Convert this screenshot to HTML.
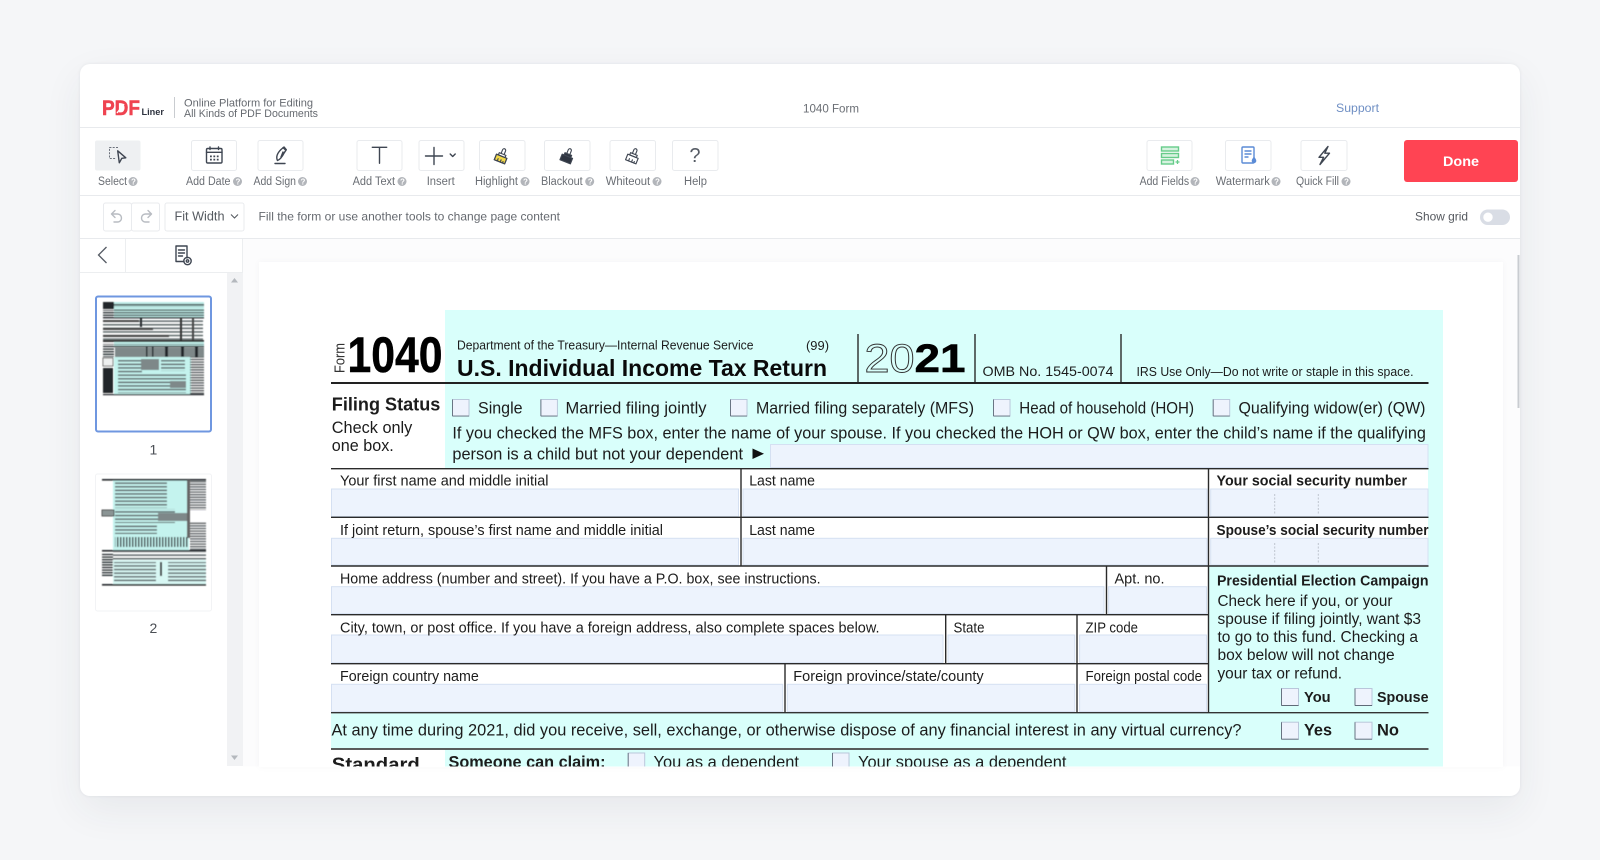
<!DOCTYPE html>
<html lang="en"><head><meta charset="utf-8"><title>1040 Form - PDF Liner</title>
<style>
html,body{margin:0;padding:0;width:1600px;height:860px;overflow:hidden;background:#f5f6f8;font-family:"Liberation Sans",sans-serif}
.card{position:absolute;left:80px;top:64px;width:1440px;height:732px;background:#fff;border-radius:10px;box-shadow:0 14px 40px rgba(40,50,70,.07),0 0 3px rgba(40,50,70,.08)}
svg.main{position:absolute;left:0;top:0;filter:blur(.3px)}
text{font-family:"Liberation Sans",sans-serif;fill:#1c1c1c}
.l{font-size:11.5px;fill:#6a6e74}
.f{font-size:14.5px}
.m{font-size:16.5px}
.b{font-weight:bold}
.bt{fill:#fff;stroke:#e9ebee;stroke-width:1}
.i{fill:none;stroke:#3f4652;stroke-width:1.4;stroke-linecap:round;stroke-linejoin:round}
.r{stroke:#2a2a2a;stroke-width:1.4;fill:none}
.fd{fill:#edf3fd;stroke:#d5e0f2;stroke-width:1}
.h{font-size:8px;fill:#fff;font-weight:bold}
</style></head>
<body>
<div class="card"></div>
<svg class="main" width="1600" height="860" viewBox="0 0 1600 860" xmlns="http://www.w3.org/2000/svg">
<defs>
<clipPath id="cl"><rect x="243" y="239" width="1277" height="527.5"/></clipPath>
<pattern id="st" width="3" height="2.6" patternUnits="userSpaceOnUse"><rect width="3" height="1.4" fill="#2f3638"/></pattern>
<pattern id="st2" width="3" height="3.6" patternUnits="userSpaceOnUse"><rect width="3" height="1.5" fill="#5b6668"/></pattern>
<pattern id="st3" width="3" height="3" patternUnits="userSpaceOnUse"><rect width="1.5" height="3" fill="#3a4244"/></pattern>
<filter id="bl" x="-5%" y="-5%" width="110%" height="110%"><feGaussianBlur stdDeviation=".65"/></filter>
<symbol id="cb" viewBox="0 0 18 18" overflow="visible"><rect x=".5" y=".5" width="17" height="17" fill="#eef3fd" stroke="#b9c6da"/><path d="M.5 17.5h17M.5.5v17" stroke="#5f6a78" stroke-width=".9" fill="none"/></symbol>
<g id="brush"><path d="M-2-2v-5a2 2 0 0 1 4 0v5"/><path d="M-4.5-2h9v3h-9z"/><path d="M-7 1h14v7.5h-14z"/><path d="M-3 8.5v-3M1 8.5v-3M4 8.5v-2"/></g>
</defs>

<!-- header -->
<rect x="80" y="127" width="1440" height="1" fill="#e8eaed"/>
<text x="102" y="115" font-size="21.500" font-weight="bold" style="fill:#ef4350;stroke:#ef4350;stroke-width:.5" textLength="38" lengthAdjust="spacingAndGlyphs">PDF</text>
<path d="M117 113l7-9" stroke="#fff" stroke-width="1.400"/>
<text x="141.500" y="115" font-size="9.500" font-weight="bold" style="fill:#2f3440" textLength="22.500" lengthAdjust="spacingAndGlyphs">Liner</text>
<rect x="174" y="97" width="1" height="21" fill="#c9ccd0"/>
<text x="184" y="106.500" font-size="11" style="fill:#666a70" textLength="129" lengthAdjust="spacingAndGlyphs">Online Platform for Editing</text>
<text x="184" y="117" font-size="11" style="fill:#666a70" textLength="134" lengthAdjust="spacingAndGlyphs">All Kinds of PDF Documents</text>
<text x="803" y="112.500" font-size="12" style="fill:#6a6e74" textLength="56" lengthAdjust="spacingAndGlyphs">1040 Form</text>
<text x="1336" y="112" font-size="12" style="fill:#6f8fc4" textLength="43" lengthAdjust="spacingAndGlyphs">Support</text>

<!-- toolbar -->
<rect x="80" y="195" width="1440" height="1" fill="#e8eaed"/>
<rect x="95" y="140.500" width="45.500" height="30" rx="2" fill="#eef0f2"/>
<g class="bt"><rect x="191.500" y="140.500" width="45" height="30" rx="2"/><rect x="258" y="140.500" width="45" height="30" rx="2"/><rect x="357" y="140.500" width="45" height="30" rx="2"/><rect x="419" y="140.500" width="45" height="30" rx="2"/><rect x="479.500" y="140.500" width="45.500" height="30" rx="2"/><rect x="544.500" y="140.500" width="45.500" height="30" rx="2"/><rect x="610" y="140.500" width="45.500" height="30" rx="2"/><rect x="672.500" y="140.500" width="45.500" height="30" rx="2"/><rect x="1147" y="140.500" width="45" height="30" rx="2"/><rect x="1225.500" y="140.500" width="45.500" height="30" rx="2"/><rect x="1301" y="140.500" width="46" height="30" rx="2"/></g>
<!-- select icon -->
<path d="M118 147.500h-8.500v11h6" fill="none" stroke="#6b717b" stroke-width="1" stroke-dasharray="2 1.300"/>
<path class="i" d="M117.700 150.800L125.800 157.800L121.800 158.300L119.300 162.800Z"/>
<!-- calendar -->
<g class="i"><rect x="206.500" y="148.500" width="15.500" height="14.500" rx="1.300"/><path d="M206.500 152.300h15.500M210 147v2.500M218.500 147v2.500"/></g>
<path d="M210 155.500h1.800v1.700H210zM213.400 155.500h1.800v1.700h-1.800zM216.800 155.500h1.800v1.700h-1.800zM210 158.800h1.800v1.700H210zM213.400 158.800h1.800v1.700h-1.800zM216.800 158.800h1.800v1.700h-1.800z" fill="#3f4652"/>
<!-- sign -->
<g class="i"><path d="M277.500 160.500c-2-4 .5-8 3.500-11l3-2.500 2.300 2.700-2 3c-1.800 3.500-3.800 6.800-6.800 7.800zM281 157l2-5M283 147.600l2.800 2.600M275 163.500h10"/></g>
<!-- T -->
<path class="i" d="M372.300 147.300h14.400M379.500 147.300v16"/>
<!-- plus -->
<path class="i" d="M434 147.500v17M425.500 156h17"/><path class="i" d="M450.200 154l2.500 2.500 2.500-2.500" stroke-width="1.100"/>
<!-- brushes -->
<g transform="translate(502 155.500) rotate(22) scale(.8)" class="i"><path d="M-7 1h14v7.500h-14z" fill="#f3d948" stroke="#3f4652"/><use href="#brush"/></g>
<g transform="translate(567.700 155.500) rotate(22) scale(.8)" class="i"><path d="M-7 1h14v7.500h-14z" fill="#2e3440"/><path d="M-4.500-2h9v3h-9z" fill="#2e3440"/><path d="M-2-2v-5a2 2 0 0 1 4 0v5"/></g>
<g transform="translate(633.300 155.500) rotate(22) scale(.8)" class="i"><use href="#brush"/></g>
<text x="689.500" y="162" font-size="20" style="fill:#555b64" textLength="11" lengthAdjust="spacingAndGlyphs">?</text>
<!-- add fields -->
<g fill="#d6f2e0" stroke="#66cc8a" stroke-width="1.400"><rect x="1161.500" y="147" width="17" height="4"/><rect x="1161.500" y="153.500" width="17" height="4"/><rect x="1161.500" y="160" width="12" height="4"/></g>
<path d="M1177.500 160v4M1175.500 162h4" stroke="#66cc8a" stroke-width="1.300"/>
<!-- watermark -->
<g fill="none" stroke="#5b8bd6" stroke-width="1.400"><rect x="1242" y="147" width="12" height="16" rx="1"/><path d="M1244.500 151h7M1244.500 154h7M1244.500 157h4"/></g>
<path d="M1254 156.500c-1.500 2-2.300 3.200-2.300 4.400a2.300 2.300 0 0 0 4.600 0c0-1.200-.8-2.400-2.300-4.400z" fill="#5b8bd6"/>
<!-- bolt -->
<path class="i" d="M1328 146.500L1319 157.300h4.600L1320 164.500l9.500-11.300h-4.700z" stroke-width="1.200"/>
<!-- labels -->
<text class="l" x="98" y="185" textLength="29" lengthAdjust="spacingAndGlyphs">Select</text>
<text class="l" x="186" y="185" textLength="44.500" lengthAdjust="spacingAndGlyphs">Add Date</text>
<text class="l" x="253.500" y="185" textLength="42.500" lengthAdjust="spacingAndGlyphs">Add Sign</text>
<text class="l" x="352.600" y="185" textLength="42.500" lengthAdjust="spacingAndGlyphs">Add Text</text>
<text class="l" x="426.700" y="185" textLength="28" lengthAdjust="spacingAndGlyphs">Insert</text>
<text class="l" x="475" y="185" textLength="43" lengthAdjust="spacingAndGlyphs">Highlight</text>
<text class="l" x="541" y="185" textLength="41.700" lengthAdjust="spacingAndGlyphs">Blackout</text>
<text class="l" x="605.700" y="185" textLength="44.500" lengthAdjust="spacingAndGlyphs">Whiteout</text>
<text class="l" x="684" y="185" textLength="23" lengthAdjust="spacingAndGlyphs">Help</text>
<text class="l" x="1139.600" y="185" textLength="49.500" lengthAdjust="spacingAndGlyphs">Add Fields</text>
<text class="l" x="1215.800" y="185" textLength="54" lengthAdjust="spacingAndGlyphs">Watermark</text>
<text class="l" x="1296" y="185" textLength="43" lengthAdjust="spacingAndGlyphs">Quick Fill</text>
<g fill="#b2b5ba"><circle cx="133" cy="181.500" r="4.500"/><circle cx="237.500" cy="181.500" r="4.500"/><circle cx="302.500" cy="181.500" r="4.500"/><circle cx="402" cy="181.500" r="4.500"/><circle cx="525" cy="181.500" r="4.500"/><circle cx="589.700" cy="181.500" r="4.500"/><circle cx="657" cy="181.500" r="4.500"/><circle cx="1195" cy="181.500" r="4.500"/><circle cx="1276" cy="181.500" r="4.500"/><circle cx="1346" cy="181.500" r="4.500"/></g>
<g class="h"><text class="h" x="131" y="184.300">?</text><text class="h" x="235.500" y="184.300">?</text><text class="h" x="300.500" y="184.300">?</text><text class="h" x="400" y="184.300">?</text><text class="h" x="523" y="184.300">?</text><text class="h" x="587.700" y="184.300">?</text><text class="h" x="655" y="184.300">?</text><text class="h" x="1193" y="184.300">?</text><text class="h" x="1274" y="184.300">?</text><text class="h" x="1344" y="184.300">?</text></g>
<rect x="1404" y="140" width="114" height="42" rx="3" fill="#ff4453"/>
<text x="1443" y="166" font-size="14" font-weight="bold" style="fill:#fff" textLength="36" lengthAdjust="spacingAndGlyphs">Done</text>

<!-- sub bar -->
<rect x="80" y="238" width="1440" height="1" fill="#e8eaed"/>
<g class="bt"><rect x="103.500" y="203" width="28" height="28" rx="2"/><rect x="131.500" y="203" width="28" height="28" rx="2"/><rect x="165" y="203" width="79" height="28" rx="2"/></g>
<g fill="none" stroke="#b8bcc2" stroke-width="1.400" stroke-linecap="round" stroke-linejoin="round"><path d="M115 210.500l-3.500 3.500 3.500 3.500M111.500 214h6a4 4 0 0 1 0 8H114"/><path d="M148 210.500l3.500 3.500-3.500 3.500M151.500 214h-6a4 4 0 0 0 0 8H149"/></g>
<text x="174.500" y="220.500" font-size="13" style="fill:#555a60" textLength="50" lengthAdjust="spacingAndGlyphs">Fit Width</text>
<path d="M231 214.500l3.500 3.500 3.500-3.500" fill="none" stroke="#555a60" stroke-width="1.100"/>
<text x="258.500" y="220.500" font-size="12" style="fill:#666a70" textLength="301.500" lengthAdjust="spacingAndGlyphs">Fill the form or use another tools to change page content</text>
<text x="1415" y="220.500" font-size="12" style="fill:#54585e" textLength="53" lengthAdjust="spacingAndGlyphs">Show grid</text>
<rect x="1480" y="209.500" width="30" height="15.500" rx="7.750" fill="#d9dde5"/><circle cx="1488" cy="217.200" r="4.700" fill="#fff"/>

<!-- sidebar -->
<rect x="242" y="239" width="1" height="527" fill="#eceef0"/>
<rect x="125" y="239" width="1" height="33" fill="#eceef0"/>
<rect x="80" y="272" width="162" height="1" fill="#eceef0"/>
<path d="M106.500 247L98.500 255l8 8" fill="none" stroke="#555b64" stroke-width="1.300"/>
<g class="i" stroke-width="1.200" fill="none"><path d="M187 258v-12h-11v15.500h8"/><path d="M178.500 250h6M178.500 253h6M178.500 256h4"/><circle cx="187.500" cy="261" r="3.700"/><circle cx="187.500" cy="261" r="1.200"/></g>
<rect x="227" y="273" width="16" height="493" fill="#f1f2f4"/>
<path d="M234.500 278l3.500 4.500h-7z" fill="#b4b8bd"/><path d="M234.500 760l3.500-4.500h-7z" fill="#b4b8bd"/>
<!-- thumb 1 -->
<rect x="96" y="296.500" width="115" height="135" rx="2" fill="#fff" stroke="#6f97e0" stroke-width="2"/>
<g filter="url(#bl)">
<rect x="114" y="302" width="90" height="15" fill="#c4f3ee"/>
<rect x="103" y="302" width="11" height="7" fill="#23282a"/>
<rect x="114" y="303" width="90" height="4" fill="url(#st)"/>
<rect x="114" y="309" width="90" height="7" fill="url(#st)" opacity=".8"/>
<rect x="103" y="310" width="11" height="6" fill="url(#st)"/>
<rect x="103" y="317" width="101" height="1.400" fill="#23282a"/>
<rect x="103" y="320" width="100" height="20" fill="url(#st2)"/>
<rect x="103" y="320" width="36" height="2" fill="#444"/><rect x="103" y="328" width="50" height="2" fill="#444"/><rect x="103" y="335" width="66" height="2" fill="#444"/>
<rect x="140" y="317" width="2" height="10" fill="#23282a"/>
<rect x="180" y="317" width="2" height="24" fill="#333"/><rect x="192" y="317" width="2" height="24" fill="#444"/>
<rect x="114" y="340" width="90" height="7" fill="#c4f3ee"/>
<rect x="103" y="340" width="101" height="2" fill="#333"/>
<rect x="103" y="344" width="101" height="3.500" fill="url(#st)"/>
<rect x="115" y="347.500" width="89" height="10" fill="#7e8889"/>
<rect x="103" y="348" width="11" height="9" fill="url(#st)"/>
<rect x="146" y="347" width="1.500" height="10" fill="#23282a"/><rect x="152" y="347" width="1.500" height="10" fill="#23282a"/><rect x="165" y="347" width="3" height="10" fill="#23282a"/><rect x="181" y="347" width="3" height="10" fill="#23282a"/><rect x="195" y="347" width="3" height="10" fill="#23282a"/>
<rect x="114" y="357" width="77" height="38" fill="#c4f3ee"/>
<rect x="118" y="359" width="24" height="14" fill="url(#st2)"/>
<rect x="141" y="359" width="18" height="11" fill="#7e8889"/>
<rect x="161" y="359" width="24" height="12" fill="url(#st2)"/>
<rect x="118" y="374" width="68" height="19" fill="url(#st2)"/>
<rect x="170" y="381" width="16" height="7" fill="#7e8889"/>
<rect x="190" y="357" width="14" height="38" fill="url(#st)" opacity=".8"/>
<rect x="103" y="358" width="10" height="8" fill="#eef0f0" stroke="#444" stroke-width=".8"/>
<rect x="103" y="368" width="10" height="25" fill="#23282a"/>
<rect x="103" y="394" width="101" height="1.200" fill="#23282a"/>
</g>
<text x="149.500" y="454.500" font-size="14" style="fill:#4a4e54">1</text>
<!-- thumb 2 -->
<rect x="95.500" y="474" width="116" height="137" rx="2" fill="#fff" stroke="#f2f3f5"/>
<g filter="url(#bl)">
<rect x="113" y="480" width="76" height="70" fill="#c4f3ee"/>
<rect x="102" y="479" width="104" height="1.600" fill="#23282a"/>
<rect x="115" y="482" width="52" height="26" fill="url(#st2)"/>
<rect x="115" y="509" width="60" height="14" fill="url(#st2)"/>
<rect x="158" y="513" width="30" height="8" fill="#7e8889"/>
<rect x="115" y="524" width="42" height="10" fill="url(#st2)"/>
<rect x="187" y="480" width="3" height="58" fill="#666"/>
<rect x="190" y="480" width="16" height="30" fill="url(#st)" opacity=".75"/>
<rect x="190" y="522" width="16" height="28" fill="url(#st)" opacity=".75"/>
<rect x="102" y="510" width="12" height="6" fill="#8a9494" stroke="#333" stroke-width=".8"/>
<rect x="115" y="537" width="74" height="10" fill="url(#st3)"/>
<rect x="102" y="550" width="104" height="1.600" fill="#23282a"/>
<rect x="102" y="553" width="11" height="24" fill="url(#st)"/>
<rect x="113" y="552" width="93" height="8" fill="url(#st2)"/>
<rect x="113" y="560" width="93" height="24" fill="#d8f8f4"/>
<rect x="114" y="562" width="42" height="20" fill="url(#st2)"/>
<rect x="160" y="562" width="2" height="14" fill="#333"/><rect x="168" y="562" width="38" height="20" fill="url(#st2)"/>
<rect x="102" y="584" width="104" height="1.600" fill="#23282a"/>
</g>
<text x="149.500" y="633" font-size="14" style="fill:#4a4e54">2</text>

<!-- main area -->
<rect x="243" y="239" width="1277" height="527.500" fill="#fcfcfd"/>
<rect x="259" y="262" width="1244" height="505" fill="#fff" style="filter:drop-shadow(0 0 3px rgba(0,0,0,.03))"/>
<rect x="1517.500" y="255" width="2" height="153" fill="#c9ccd1"/>

<g clip-path="url(#cl)">
<!-- teal zones -->
<path d="M445 310H1443V767H331V713H1208V566H1428V469H445Z" fill="#d9fffb"/>
<rect x="331" y="749" width="114" height="20" fill="#fff"/>
<!-- header of form -->
<text transform="translate(344.500 373) rotate(-90)" font-size="15" style="fill:#333" textLength="30" lengthAdjust="spacingAndGlyphs">Form</text>
<text x="347.500" y="372" font-size="50" font-weight="bold" style="fill:#000;stroke:#000;stroke-width:.5" textLength="95" lengthAdjust="spacingAndGlyphs">1040</text>
<text x="457" y="349.500" font-size="12.500" textLength="296.500" lengthAdjust="spacingAndGlyphs">Department of the Treasury—Internal Revenue Service</text>
<text x="806" y="350" font-size="13" textLength="23" lengthAdjust="spacingAndGlyphs">(99)</text>
<text x="457" y="376" font-size="23" font-weight="bold" style="fill:#0a0a0a" textLength="370" lengthAdjust="spacingAndGlyphs">U.S. Individual Income Tax Return</text>
<text x="864.500" y="372" font-size="40" style="fill:none;stroke:#333;stroke-width:.9" textLength="50" lengthAdjust="spacingAndGlyphs">20</text>
<text x="914.500" y="372" font-size="40" font-weight="bold" style="fill:#000;stroke:#000;stroke-width:.6" textLength="51" lengthAdjust="spacingAndGlyphs">21</text>
<text x="982.500" y="376" font-size="14" textLength="131" lengthAdjust="spacingAndGlyphs">OMB No. 1545-0074</text>
<text x="1136.500" y="376" font-size="12.500" textLength="277" lengthAdjust="spacingAndGlyphs">IRS Use Only—Do not write or staple in this space.</text>
<path class="r" d="M858 334V383M975 334V383M1121 334V383"/>
<path d="M331 383H1428.500" stroke="#222" stroke-width="2"/>
<!-- filing status -->
<text x="331.800" y="410.700" font-size="18.500" font-weight="bold" textLength="108.500" lengthAdjust="spacingAndGlyphs">Filing Status</text>
<text x="331.800" y="433" class="m" textLength="80.500" lengthAdjust="spacingAndGlyphs">Check only</text>
<text x="331.800" y="451" class="m" textLength="62" lengthAdjust="spacingAndGlyphs">one box.</text>
<use href="#cb" x="452" y="399" width="17.500" height="17.500"/><use href="#cb" x="540.400" y="399" width="17.500" height="17.500"/><use href="#cb" x="730" y="399" width="17.500" height="17.500"/><use href="#cb" x="993" y="399" width="17.500" height="17.500"/><use href="#cb" x="1212.700" y="399" width="17.500" height="17.500"/>
<text x="478" y="413.500" class="m" textLength="44.600" lengthAdjust="spacingAndGlyphs">Single</text>
<text x="565.500" y="413.500" class="m" textLength="141" lengthAdjust="spacingAndGlyphs">Married filing jointly</text>
<text x="756" y="413.500" class="m" textLength="218" lengthAdjust="spacingAndGlyphs">Married filing separately (MFS)</text>
<text x="1019.300" y="413.500" class="m" textLength="174.700" lengthAdjust="spacingAndGlyphs">Head of household (HOH)</text>
<text x="1238.500" y="413.500" class="m" textLength="187" lengthAdjust="spacingAndGlyphs">Qualifying widow(er) (QW)</text>
<text x="452.400" y="438.500" class="m" textLength="973.500" lengthAdjust="spacingAndGlyphs">If you checked the MFS box, enter the name of your spouse. If you checked the HOH or QW box, enter the child’s name if the qualifying</text>
<text x="452.400" y="459.500" class="m" textLength="290.600" lengthAdjust="spacingAndGlyphs">person is a child but not your dependent</text>
<path d="M752.500 448.500L764 453.800 752.500 459Z" fill="#111"/>
<rect class="fd" x="770.500" y="444.500" width="657.500" height="23"/>
<!-- name rows -->
<rect class="fd" x="331.500" y="489" width="407" height="27.500"/><rect class="fd" x="743" y="489" width="464" height="27.500"/><rect class="fd" x="1210.700" y="489" width="217.300" height="27.500"/>
<rect class="fd" x="331.500" y="538.300" width="407" height="26.700"/><rect class="fd" x="743" y="538.300" width="464" height="26.700"/><rect class="fd" x="1210.700" y="538.300" width="217.300" height="26.700"/>
<path d="M1274.700 494V514M1318.300 494V514M1274.700 543V563M1318.300 543V563" stroke="#bfc5cf" stroke-width="1" stroke-dasharray="2 1.500"/>
<text x="340" y="485.500" class="f" textLength="208.500" lengthAdjust="spacingAndGlyphs">Your first name and middle initial</text>
<text x="749.200" y="485.500" class="f" textLength="65.800" lengthAdjust="spacingAndGlyphs">Last name</text>
<text x="1216.500" y="485.500" class="f b" textLength="190.500" lengthAdjust="spacingAndGlyphs">Your social security number</text>
<text x="340" y="534.800" class="f" textLength="323" lengthAdjust="spacingAndGlyphs">If joint return, spouse’s first name and middle initial</text>
<text x="749.200" y="534.800" class="f" textLength="65.800" lengthAdjust="spacingAndGlyphs">Last name</text>
<text x="1216.500" y="534.800" class="f b" textLength="212" lengthAdjust="spacingAndGlyphs">Spouse’s social security number</text>
<!-- address rows -->
<rect class="fd" x="331.500" y="586.700" width="772.500" height="27"/><rect class="fd" x="1108.600" y="586.700" width="97.900" height="27"/>
<rect class="fd" x="331.500" y="635" width="611.500" height="27.700"/><rect class="fd" x="948" y="635" width="126.700" height="27.700"/><rect class="fd" x="1079.600" y="635" width="126.900" height="27.700"/>
<rect class="fd" x="331.500" y="684.300" width="451.200" height="27.400"/><rect class="fd" x="787.300" y="684.300" width="287.400" height="27.400"/><rect class="fd" x="1079.600" y="684.300" width="126.900" height="27.400"/>
<text x="340" y="583.500" class="f" textLength="480.600" lengthAdjust="spacingAndGlyphs">Home address (number and street). If you have a P.O. box, see instructions.</text>
<text x="1114.500" y="583.500" class="f" textLength="50" lengthAdjust="spacingAndGlyphs">Apt. no.</text>
<text x="340" y="632.500" class="f" textLength="539.500" lengthAdjust="spacingAndGlyphs">City, town, or post office. If you have a foreign address, also complete spaces below.</text>
<text x="953.500" y="632.500" class="f" textLength="31" lengthAdjust="spacingAndGlyphs">State</text>
<text x="1085.500" y="632.500" class="f" textLength="52.500" lengthAdjust="spacingAndGlyphs">ZIP code</text>
<text x="340" y="680.800" class="f" textLength="138.800" lengthAdjust="spacingAndGlyphs">Foreign country name</text>
<text x="793.300" y="680.800" class="f" textLength="190.400" lengthAdjust="spacingAndGlyphs">Foreign province/state/county</text>
<text x="1085.500" y="680.800" class="f" textLength="116.500" lengthAdjust="spacingAndGlyphs">Foreign postal code</text>
<!-- rules -->
<path class="r" d="M331 468.700H1428.500M331 517.300H1428.500M331 566H1428.500M331 614.700H1208M331 663.700H1208"/>
<path d="M331 712.700H1428.500" stroke="#333" stroke-width="1.300"/>
<path class="r" d="M741 469V566M1208.500 469V712.700M1106.500 566V614.700M945.700 614.700V663.700M1077 614.700V712.700M785 663.700V712.700"/>
<path d="M331 749H1428.500" stroke="#444" stroke-width="1.700"/>
<!-- presidential -->
<text x="1217" y="585.300" class="f b" textLength="211.500" lengthAdjust="spacingAndGlyphs">Presidential Election Campaign</text>
<text x="1217.500" y="606" font-size="15.500" textLength="175" lengthAdjust="spacingAndGlyphs">Check here if you, or your</text>
<text x="1217.500" y="624" font-size="15.500" textLength="203.500" lengthAdjust="spacingAndGlyphs">spouse if filing jointly, want $3</text>
<text x="1217.500" y="642" font-size="15.500" textLength="200.500" lengthAdjust="spacingAndGlyphs">to go to this fund. Checking a</text>
<text x="1217.500" y="660" font-size="15.500" textLength="177.200" lengthAdjust="spacingAndGlyphs">box below will not change</text>
<text x="1217.500" y="678.300" font-size="15.500" textLength="124.500" lengthAdjust="spacingAndGlyphs">your tax or refund.</text>
<use href="#cb" x="1281" y="688" width="18" height="18"/><use href="#cb" x="1354.500" y="688" width="18" height="18"/>
<text x="1304" y="702" class="f b" font-size="15" textLength="26.600" lengthAdjust="spacingAndGlyphs">You</text>
<text x="1377" y="702" class="f b" textLength="51.500" lengthAdjust="spacingAndGlyphs">Spouse</text>
<!-- currency row -->
<text x="331.500" y="735.700" class="m" textLength="910" lengthAdjust="spacingAndGlyphs">At any time during 2021, did you receive, sell, exchange, or otherwise dispose of any financial interest in any virtual currency?</text>
<use href="#cb" x="1281" y="721.700" width="18" height="18"/><use href="#cb" x="1354.500" y="721.700" width="18" height="18"/>
<text x="1304" y="735.700" font-size="16.500" class="b" textLength="28" lengthAdjust="spacingAndGlyphs">Yes</text>
<text x="1377" y="735.700" font-size="16.500" class="b" textLength="22" lengthAdjust="spacingAndGlyphs">No</text>
<!-- standard row -->
<text x="331.800" y="771" font-size="19.500" font-weight="bold" textLength="88" lengthAdjust="spacingAndGlyphs">Standard</text>
<text x="448.500" y="767.500" font-size="16.500" font-weight="bold" textLength="157" lengthAdjust="spacingAndGlyphs">Someone can claim:</text>
<use href="#cb" x="627.700" y="752.500" width="17.500" height="17.500"/><use href="#cb" x="832" y="752.500" width="17.500" height="17.500"/>
<text x="653.500" y="767.500" class="m" textLength="145.500" lengthAdjust="spacingAndGlyphs">You as a dependent</text>
<text x="858" y="767.500" class="m" textLength="208.500" lengthAdjust="spacingAndGlyphs">Your spouse as a dependent</text>
</g>
</svg>
</body></html>
